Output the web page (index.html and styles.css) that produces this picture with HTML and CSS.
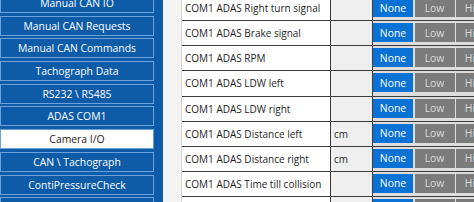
FILE: index.html
```html
<!DOCTYPE html>
<html>
<head>
<meta charset="utf-8">
<link rel="stylesheet" href="styles.css">
</head>
<body>
<div class="app">
  <nav class="sidebar">
    <div class="menu">
      <div class="mbtn">Manual CAN IO</div>
      <div class="mbtn">Manual CAN Requests</div>
      <div class="mbtn">Manual CAN Commands</div>
      <div class="mbtn">Tachograph Data</div>
      <div class="mbtn">RS232 \ RS485</div>
      <div class="mbtn">ADAS COM1</div>
      <div class="mbtn active">Camera I/O</div>
      <div class="mbtn">CAN \ Tachograph</div>
      <div class="mbtn">ContiPressureCheck</div>
      <div class="mbtn"></div>
    </div>
  </nav>
  <div class="spacer"></div>
  <div class="grid">
    <div class="row"><div class="name">COM1 ADAS Right turn signal</div><div class="unit"></div><div class="opts"><div class="opt none">None</div><div class="opt low">Low</div><div class="opt low">High</div></div></div>
    <div class="row"><div class="name">COM1 ADAS Brake signal</div><div class="unit"></div><div class="opts"><div class="opt none">None</div><div class="opt low">Low</div><div class="opt low">High</div></div></div>
    <div class="row"><div class="name">COM1 ADAS RPM</div><div class="unit"></div><div class="opts"><div class="opt none">None</div><div class="opt low">Low</div><div class="opt low">High</div></div></div>
    <div class="row"><div class="name">COM1 ADAS LDW left</div><div class="unit"></div><div class="opts"><div class="opt none">None</div><div class="opt low">Low</div><div class="opt low">High</div></div></div>
    <div class="row"><div class="name">COM1 ADAS LDW right</div><div class="unit"></div><div class="opts"><div class="opt none">None</div><div class="opt low">Low</div><div class="opt low">High</div></div></div>
    <div class="row"><div class="name">COM1 ADAS Distance left</div><div class="unit">cm</div><div class="opts"><div class="opt none">None</div><div class="opt low">Low</div><div class="opt low">High</div></div></div>
    <div class="row"><div class="name">COM1 ADAS Distance right</div><div class="unit">cm</div><div class="opts"><div class="opt none">None</div><div class="opt low">Low</div><div class="opt low">High</div></div></div>
    <div class="row"><div class="name">COM1 ADAS Time till collision</div><div class="unit"></div><div class="opts"><div class="opt none">None</div><div class="opt low">Low</div><div class="opt low">High</div></div></div>
    <div class="row"><div class="name"></div><div class="unit"></div><div class="opts"><div class="opt none"></div><div class="opt low"></div><div class="opt low"></div></div></div>
  </div>
</div>
</body>
</html>
```
FILE: styles.css
```css
html, body {
  margin: 0;
  padding: 0;
}
body {
  width: 474px;
  height: 202px;
  overflow: hidden;
  background: #f3f3f3;
  font-family: "Open Sans", "Noto Sans", sans-serif;
  font-size: 10px;
}
.app {
  display: flex;
  height: 202px;
  overflow: hidden;
}
.sidebar {
  width: 163px;
  flex: none;
  background: #0e5ba8;
  overflow: hidden;
}
.menu {
  margin-top: -7px;
  display: flex;
  flex-direction: column;
  gap: 2.7px;
  width: 154px;
}
.mbtn {
  height: 20px;
  box-sizing: border-box;
  border: 1px solid #6aa2dc;
  color: #ffffff;
  font-size: 10.4px;
  display: flex;
  align-items: center;
  justify-content: center;
  white-space: nowrap;
}
.mbtn.active {
  background: #ffffff;
  color: #1a1a1a;
}
.spacer {
  width: 19px;
  flex: none;
  box-sizing: border-box;
  background: #f3f3f3;
  border-right: 1px solid #d6d6d6;
}
.grid {
  flex: 1;
  margin-top: -4px;
  overflow: hidden;
}
.row {
  display: flex;
  height: 25.15px;
  box-sizing: border-box;
  border-bottom: 1px solid #3c3c3c;
}
.name {
  width: 148px;
  flex: none;
  box-sizing: border-box;
  background: #ffffff;
  padding-left: 3px;
  display: flex;
  align-items: center;
  color: #1e1e1e;
  white-space: nowrap;
}
.unit {
  width: 42px;
  flex: none;
  box-sizing: border-box;
  border-left: 1px solid #3c3c3c;
  background: #efefef;
  padding-left: 3px;
  display: flex;
  align-items: center;
  color: #2a2a2a;
}
.opts {
  flex: 1;
  display: flex;
  gap: 1.5px;
  padding-top: 2px;
  background: #dddddd;
  border-left: 1px solid #3c3c3c;
  overflow: hidden;
}
.opt {
  width: 40px;
  height: 19px;
  flex: none;
  display: flex;
  align-items: center;
  justify-content: center;
  font-size: 10.4px;
  white-space: nowrap;
}
.none {
  background: #0a72d4;
  color: #ffffff;
}
.low {
  background: #7b7b7b;
  color: #dadada;
}
```
